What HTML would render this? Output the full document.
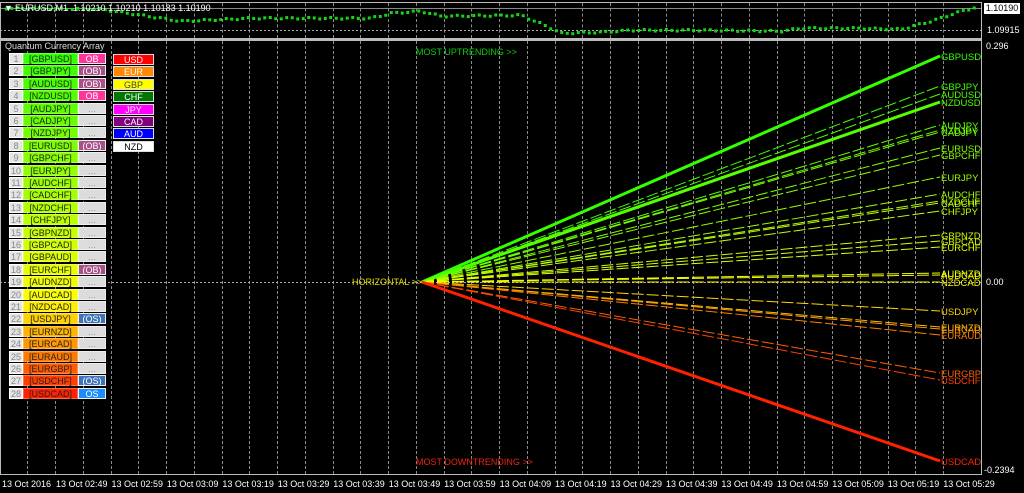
<!DOCTYPE html>
<html><head><meta charset="utf-8"><style>
body{margin:0;width:1024px;height:493px;background:#000;overflow:hidden;font-family:"Liberation Sans",sans-serif;position:relative}
.t{position:absolute;font-size:9px;white-space:nowrap}
.cell{position:absolute;height:11px;font-size:9px;line-height:11px;text-align:center;box-sizing:border-box}
.g{position:absolute;width:0;border-left:1px dashed #8a8a8a}
</style></head><body>
<div id="gr"></div>
<svg id="s" width="1024" height="493" style="position:absolute;left:0;top:0"></svg>
<div id="h"></div>
<script>
var G='';
for(var k=0;k<34;k++){var gx=Math.round(943-27.75*k);if(gx<2)break;G+='<div class="g" style="left:'+gx+'px;top:3px;height:35px"></div><div class="g" style="left:'+gx+'px;top:41px;height:433px"></div>';}
document.getElementById('gr').innerHTML=G;
var s=document.getElementById('s'),h=document.getElementById('h'),o='';
o+='<line x1="0" y1="30.5" x2="982" y2="30.5" stroke="#aaa" stroke-dasharray="2,2"/>';
o+='<line x1="0" y1="8.5" x2="982" y2="8.5" stroke="#888"/>';
o+='<line x1="0" y1="282.5" x2="982" y2="282.5" stroke="#aaa" stroke-dasharray="2,2"/>';
o+='<rect x="0.5" y="2.5" width="981" height="36" fill="none" stroke="#bbb"/>';
o+='<line x1="0" y1="39.5" x2="982" y2="39.5" stroke="#bbb" stroke-width="2"/>';
o+='<rect x="0.5" y="40.5" width="981" height="434" fill="none" stroke="#bbb"/>';
var kp=[[0,7],[100,8],[180,20],[250,17],[370,17],[390,12],[420,10],[440,15],[520,14],[550,27],[560,32],[600,31],[630,29],[700,29],[780,30],[800,27],[850,27],[900,28],[930,20],[960,10],[975,6]];
function iy(x){for(var i=1;i<kp.length;i++)if(x<=kp[i][0]){var a=kp[i-1],b=kp[i];return a[1]+(b[1]-a[1])*(x-a[0])/(b[0]-a[0]);}return 6;}
for(var cx=5;cx<975;cx+=5.5){var y=iy(cx)+Math.sin(cx*0.3)*0.8;o+='<rect x="'+cx.toFixed(1)+'" y="'+y.toFixed(1)+'" width="2.5" height="2.5" fill="#1c1" stroke="#2f2" stroke-width="0.4"/>';}
var L=[['GBPUSD',56,1],['GBPJPY',86],['AUDUSD',94],['NZDUSD',102,1],['AUDJPY',125],['NZDJPY',130],['CADJPY',132],['EURUSD',148],['GBPCHF',155],['EURJPY',177],['AUDCHF',194],['NZDCHF',201],['CADCHF',203],['CHFJPY',211],['GBPNZD',235],['GBPCAD',241],['EURCHF',247],['AUDNZD',273],['AUDCAD',275],['NZDCAD',282],['USDJPY',311],['EURNZD',327],['EURCAD',329],['EURAUD',335],['EURGBP',373],['USDCHF',380],['USDCAD',461,1]];
function col(t){var r,g,m=0.72;if(t<m){r=Math.round(51+t/m*204);g=255;}else{r=255;g=Math.round(255-(t-m)/(1-m)*221);}return 'rgb('+r+','+g+',0)';}
for(var i=0;i<L.length;i++){var l=L[i],c=col(i/(L.length-1));
o+='<line x1="422" y1="282" x2="940" y2="'+l[1]+'" stroke="'+c+'" '+(l[2]?'stroke-width="3"':'stroke-width="1" stroke-dasharray="12,3"')+'/>';
o+='<text x="941" y="'+(l[1]+4)+'" fill="'+c+'" font-size="9.5">'+l[0]+'</text>';}
s.innerHTML=o;
var H='<div class="t" style="left:5px;top:41px;color:#ddd">Quantum Currency Array</div>';
var P=['GBPUSD','GBPJPY','AUDUSD','NZDUSD','AUDJPY','CADJPY','NZDJPY','EURUSD','GBPCHF','EURJPY','AUDCHF','CADCHF','NZDCHF','CHFJPY','GBPNZD','GBPCAD','GBPAUD','EURCHF','AUDNZD','AUDCAD','NZDCAD','USDJPY','EURNZD','EURCAD','EURAUD','EURGBP','USDCHF','USDCAD'];
var S={1:'OB',2:'(OB)',3:'(OB)',4:'OB',8:'(OB)',18:'(OB)',22:'(OS)',27:'(OS)',28:'OS'};
var SC={'OB':'#ff3399','(OB)':'#a85088','(OS)':'#3f74b8','OS':'#1a8cff'};
for(var i=0;i<28;i++){var y=53+i*12.4,c=col(i/27),st=S[i+1]||'...';
H+='<div class="cell" style="left:9px;top:'+y+'px;width:14px;background:#e4e4e4;color:#888;border:1px solid #fff">'+(i+1)+'</div>';
H+='<div class="cell" style="left:23px;top:'+y+'px;width:55px;background:'+c+';color:#222;border:1px solid rgba(255,255,255,.3)">['+P[i]+']</div>';
H+='<div class="cell" style="left:78px;top:'+y+'px;width:28px;background:'+(SC[st]||'#dcdcdc')+';color:'+(SC[st]?'#fff':'#999')+';border:1px solid #eee">'+st+'</div>';}
var C=[['USD','#ff0000','#fff'],['EUR','#ff8800','#fff'],['GBP','#ffff00','#444'],['CHF','#007700','#fff'],['JPY','#ff00ff','#fff'],['CAD','#800080','#fff'],['AUD','#0000ff','#fff'],['NZD','#ffffff','#000']];
for(var i=0;i<8;i++)H+='<div class="cell" style="left:113px;top:'+(54+i*12.4)+'px;width:41px;background:'+C[i][1]+';color:'+C[i][2]+';border:1px solid #ddd">'+C[i][0]+'</div>';
H+='<div class="t" style="left:15px;top:3px;color:#fff">EURUSD,M1&nbsp; 1.10210 1.10210 1.10183 1.10190</div>';
H+='<div class="t" style="left:4px;top:3px;color:#fff">&#9660;</div>';
H+='<div class="t" style="left:984px;top:3px;width:36px;height:11px;background:#fff;color:#000;text-align:center;line-height:11px">1.10190</div>';
H+='<div class="t" style="left:987px;top:25px;color:#fff">1.09915</div>';
H+='<div class="t" style="left:986px;top:41px;color:#fff">0.296</div>';
H+='<div class="t" style="left:986px;top:277px;color:#fff">0.00</div>';
H+='<div class="t" style="left:984px;top:465px;color:#fff">-0.2394</div>';
H+='<div class="t" style="left:416px;top:47px;color:#1c1">MOST UPTRENDING &gt;&gt;</div>';
H+='<div class="t" style="left:352px;top:277px;color:#dd0">HORIZONTAL &gt;&gt;</div>';
H+='<div class="t" style="left:416px;top:457px;color:#e21">MOST DOWNTRENDING &gt;&gt;</div>';
H+='<div class="t" style="left:2px;top:479px;color:#fff">13 Oct 2016</div>';
var tm=['02:49','02:59','03:09','03:19','03:29','03:39','03:49','03:59','04:09','04:19','04:29','04:39','04:49','04:59','05:09','05:19','05:29'];
for(var i=0;i<tm.length;i++)H+='<div class="t" style="left:'+(56+i*55.45)+'px;top:479px;color:#fff">13 Oct '+tm[i]+'</div>';
h.innerHTML=H;
</script>
</body></html>
